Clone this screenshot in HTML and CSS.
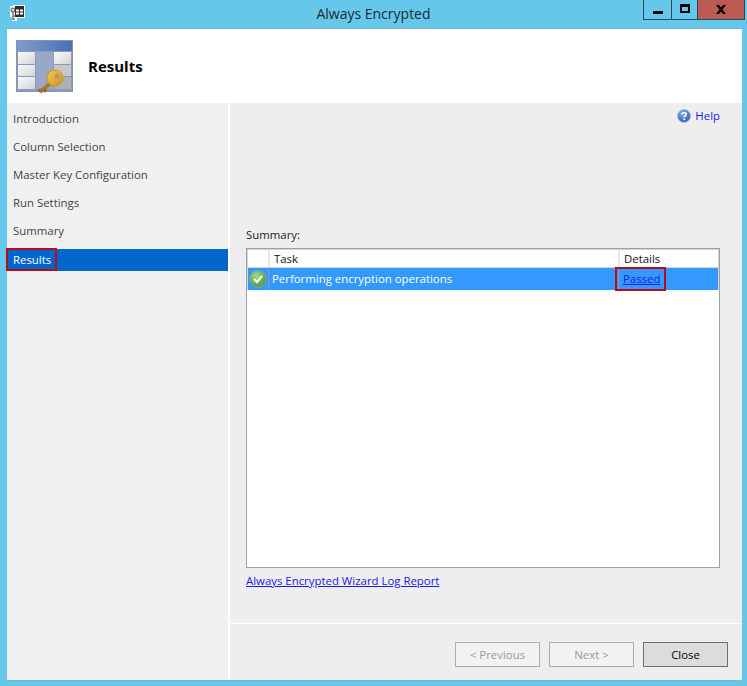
FILE: index.html
```html
<!DOCTYPE html>
<html lang="en">
<head>
<meta charset="utf-8">
<title>Always Encrypted</title>
<link rel="stylesheet" href="styles.css">
</head>
<body>
<div class="window">
  <div class="titlebar">
    <svg class="app-icon" width="16" height="16" viewBox="0 0 16 16">
      <path d="M3 0h12v13H7v3H2v-4H0V1h3z" fill="#fff"/>
      <rect x="5" y="1" width="9" height="11" fill="#2b2b2b"/>
      <path d="M6 4.500h3v2H6zM10 4.500h3v2h-3zM6 7.500h3v2H6zM10 7.500h3v2h-3z" fill="#fff"/>
      <circle cx="3" cy="5" r="2" fill="#ddd" stroke="#444"/>
      <path d="M3 7v8M3 11h2M3 14h2" stroke="#444" fill="none"/>
    </svg>
    <div class="title">Always Encrypted</div>
    <div class="controls">
      <div class="ctl ctl-min"><span class="min-glyph"></span></div>
      <div class="ctl ctl-max"><span class="max-glyph"></span></div>
      <div class="ctl ctl-close">
        <svg width="10" height="9" viewBox="0 0 10 9"><path d="M0 0h3l2 2.500L7 0h3L6.500 4.500 10 9H7L5 6.500 3 9H0l3.500-4.500z" fill="#000"/></svg>
      </div>
    </div>
  </div>
  <div class="client">
    <header class="banner">
      <svg class="banner-icon" width="58" height="54" viewBox="0 0 58 54">
        <defs>
          <linearGradient id="hd" x1="0" x2="1" y1="0" y2="0"><stop offset="0" stop-color="#7f9ccb"/><stop offset="1" stop-color="#4a70b8"/></linearGradient>
          <linearGradient id="cell" x1="0" x2="1" y1="0" y2="1"><stop offset="0" stop-color="#fafafa"/><stop offset="1" stop-color="#d5d5d5"/></linearGradient>
          <linearGradient id="key" x1="0" x2="1" y1="0" y2="1"><stop offset="0" stop-color="#f9c94f"/><stop offset="1" stop-color="#c98f20"/></linearGradient>
          <filter id="soft" x="-10%" y="-10%" width="120%" height="120%"><feGaussianBlur stdDeviation="0.400"/></filter>
        </defs>
        <g filter="url(#soft)">
          <rect x="0.500" y="0.500" width="56" height="51" fill="#8d99ba" stroke="#8b93ab"/>
          <rect x="1" y="1" width="55" height="10" fill="url(#hd)"/>
          <rect x="2" y="12" width="17" height="12" fill="url(#cell)"/>
          <rect x="2" y="25" width="17" height="11" fill="url(#cell)"/>
          <rect x="2" y="37" width="17" height="12" fill="url(#cell)"/>
          <rect x="20" y="12" width="17" height="37" fill="#9aa8c8"/>
          <rect x="38" y="12" width="17" height="12" fill="url(#cell)"/>
          <rect x="38" y="25" width="17" height="11" fill="#c8c8c8"/>
          <rect x="38" y="37" width="17" height="12" fill="#b0b0b0"/>
          <path d="M36 42L24 52" stroke="#a97a2a" stroke-width="4" fill="none"/>
          <path d="M28 49l2 3M24 52l-1-3" stroke="#93692a" stroke-width="2.500" fill="none"/>
          <circle cx="39" cy="38" r="8" fill="url(#key)" stroke="#c4952f"/>
          <circle cx="41" cy="36" r="2.300" fill="#a39a78"/>
        </g>
      </svg>
      <h1 class="banner-title">Results</h1>
    </header>
    <div class="main">
      <nav class="sidebar">
        <div class="nav-item">Introduction</div>
        <div class="nav-item">Column Selection</div>
        <div class="nav-item">Master Key Configuration</div>
        <div class="nav-item">Run Settings</div>
        <div class="nav-item">Summary</div>
        <div class="nav-item nav-active">Results<span class="mark mark-nav"></span></div>
      </nav>
      <section class="panel">
        <div class="content">
          <div class="help-row">
            <svg class="help-icon" width="14" height="14" viewBox="0 0 14 14">
              <defs><radialGradient id="hb" cx="0.400" cy="0.300" r="0.800"><stop offset="0" stop-color="#8fb4ea"/><stop offset="1" stop-color="#1c4fa8"/></radialGradient></defs>
              <circle cx="7" cy="7" r="6.500" fill="url(#hb)" stroke="#a9bcd8"/>
              <path d="M5 5.300c0-2.200 4.200-2.200 4.200 0 0 1.500-2 1.500-2 3" fill="none" stroke="#fff" stroke-width="1.500"/>
              <rect x="6.400" y="9.500" width="1.700" height="1.700" fill="#fff"/>
            </svg>
            <a class="link help-link">Help</a>
          </div>
          <div class="summary-label">Summary:</div>
          <div class="grid">
            <div class="grid-head">
              <div class="cell-icon"></div>
              <div class="cell-task">Task</div>
              <div class="cell-details">Details</div>
            </div>
            <div class="grid-row">
              <div class="cell-icon">
                <svg width="18" height="18" viewBox="0 0 18 18">
                  <defs><radialGradient id="ok" cx="0.400" cy="0.300" r="0.800"><stop offset="0" stop-color="#a6d98d"/><stop offset="1" stop-color="#3c8f3c"/></radialGradient></defs>
                  <circle cx="9" cy="9" r="8.300" fill="url(#ok)" stroke="#8aa88a"/>
                  <path d="M5 9l3 3 5-6" fill="none" stroke="#fff" stroke-width="2"/>
                </svg>
              </div>
              <div class="cell-task">Performing encryption operations</div>
              <div class="cell-details"><a class="link">Passed</a><span class="mark mark-passed"></span></div>
            </div>
          </div>
          <a class="link log-link">Always Encrypted Wizard Log Report</a>
        </div>
        <footer class="footer">
          <button class="btn" disabled>&lt; Previous</button>
          <button class="btn" disabled>Next &gt;</button>
          <button class="btn btn-default">Close</button>
        </footer>
      </section>
    </div>
  </div>
</div>
</body>
</html>
```
FILE: styles.css
```css
* { box-sizing: border-box; }
html, body { margin: 0; padding: 0; }
body {
  width: 747px;
  height: 686px;
  overflow: hidden;
  font-family: "Open Sans", "Noto Sans", sans-serif;
  font-size: 11.4px;
  color: #000;
}
.window {
  width: 747px;
  height: 686px;
  background: #65c8ea;
  display: flex;
  flex-direction: column;
}
.titlebar {
  height: 29px;
  position: relative;
  flex: none;
}
.app-icon { position: absolute; left: 10px; top: 5px; }
.title {
  text-align: center;
  font-size: 14px;
  line-height: 28px;
  color: #1b2a33;
}
.controls {
  position: absolute;
  left: 643px;
  top: 0;
  display: flex;
  height: 20px;
  border: 1px solid #2d4a5a;
  border-top: 0;
}
.ctl { display: flex; justify-content: center; align-items: center; }
.ctl-min { width: 28px; border-right: 1px solid #2d4a5a; }
.ctl-max { width: 26px; border-right: 1px solid #2d4a5a; }
.ctl-close { width: 46px; background: #bc5b52; }
.min-glyph { width: 10px; height: 3px; background: #000; margin-top: 5px; }
.max-glyph { width: 10px; height: 9px; border: 2px solid #000; border-top-width: 3px; margin-top: -3px; }
.client {
  width: 735px;
  margin-left: 7px;
  flex: 1;
  display: flex;
  flex-direction: column;
  margin-bottom: 6px;
  box-shadow: 0 -1px 0 #7fb4cc, 0 1px 0 #7fb4cc;
}
.banner {
  height: 74px;
  background: #fff;
  display: flex;
  align-items: center;
  padding: 0 0 0 9px;
  flex: none;
}
.banner-icon { margin-top: 1px; }
.banner-title {
  margin: 0 0 0 14px;
  font-size: 15px;
  font-weight: 700;
}
.main { flex: 1; display: flex; min-height: 0; }
.sidebar {
  width: 223px;
  background: #f0f0f0;
  border-right: 2px solid #fff;
  padding-top: 2px;
  flex: none;
}
.nav-item {
  height: 28px;
  padding-left: 6px;
  line-height: 28px;
  color: #444;
}
.nav-active {
  height: 22px;
  line-height: 22px;
  background: #0066cc;
  color: #fff;
  margin-top: 4px;
  position: relative;
  width: 221px;
}
.mark { position: absolute; border: 2px solid #b80c14; pointer-events: none; }
.mark-nav { left: -1px; top: -1px; width: 51px; height: 23px; }
.panel { flex: 1; display: flex; flex-direction: column; background: #eee; min-width: 0; }
.content { flex: none; height: 521px; padding: 0 22px 0 16px; border-bottom: 1px solid #fff; }
.help-row {
  height: 25px;
  display: flex;
  justify-content: flex-end;
  align-items: center;
  gap: 4px;
}
.link { color: #1a1aee; }
.help-link { line-height: 14px; }
.summary-label { margin-top: 98px; line-height: 18px; color: #222; }
.grid {
  width: 474px;
  height: 320px;
  background: #fff;
  border: 1px solid #a0a0a0;
  margin-top: 4px;
}
.grid-head, .grid-row { display: flex; border-left: 1px solid #d4d4d4; border-right: 1px solid #d4d4d4; }
.grid-head {
  height: 19px;
  line-height: 17px;
  border-top: 1px solid #d4d4d4;
  border-bottom: 1px solid #d4d4d4;
  color: #111;
}
.grid-row { height: 22px; line-height: 22px; background: #3399ff; color: #fff; }
.cell-icon { display: flex; align-items: center; justify-content: center; flex: none; }
.cell-task { flex: none; }
.grid-head .cell-icon { width: 22px; border-right: 2px solid #e8e8e8; }
.grid-row .cell-icon { width: 21px; border-right: 1px solid #8b9aa8; }
.grid-head .cell-task { width: 350px; padding-left: 4px; border-right: 2px solid #e8e8e8; }
.grid-row .cell-task { width: 350px; padding-left: 3px; border-right: 1px solid #8b9aa8; }
.cell-details { flex: 1; padding-left: 4px; position: relative; }
.cell-details .link { text-decoration: underline; }
.mark-passed { left: -4px; top: -1px; width: 51px; height: 24px; }
.log-link {
  display: inline-block;
  margin-top: 4px;
  text-decoration: underline;
  line-height: 18px;
}
.footer {
  flex: 1;
  display: flex;
  justify-content: flex-end;
  gap: 9px;
  padding: 18px 14px 0 0;
}
.btn {
  width: 85px;
  height: 25px;
  background: #f2f2f2;
  border: 1px solid #adadad;
  font: inherit;
  color: #9a9a9a;
  padding: 0;
}
.btn-default { background: #dcdcdc; border-color: #707070; color: #000; }
```
